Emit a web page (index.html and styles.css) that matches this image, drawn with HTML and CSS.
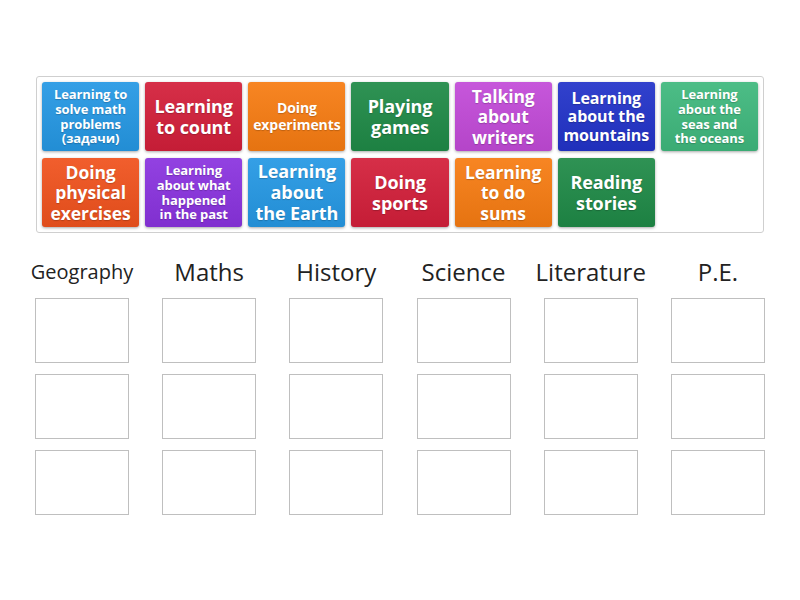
FILE: index.html
```html
<!DOCTYPE html>
<html>
<head>
<meta charset="utf-8">
<link rel="stylesheet" href="styles.css">
</head>
<body>
<main class="page">
  <section class="pool">
    <div class="card blue s13">Learning to<br>solve math<br>problems<br>(задачи)</div>
    <div class="card crimson s18">Learning<br>to count</div>
    <div class="card orange s14">Doing<br>experiments</div>
    <div class="card green s18">Playing<br>games</div>
    <div class="card magenta s175">Talking<br>about<br>writers</div>
    <div class="card navy s16">Learning<br>about the<br>mountains</div>
    <div class="card sea s13">Learning<br>about the<br>seas and<br>the oceans</div>
    <div class="card redorange s175">Doing<br>physical<br>exercises</div>
    <div class="card purple s13">Learning<br>about what<br>happened<br>in the past</div>
    <div class="card blue s18">Learning<br>about<br>the Earth</div>
    <div class="card crimson s18">Doing<br>sports</div>
    <div class="card orange s175">Learning<br>to do<br>sums</div>
    <div class="card green s18">Reading<br>stories</div>
  </section>
  <section class="groups">
    <div class="group"><h2 class="title small">Geography</h2><div class="slot"></div><div class="slot"></div><div class="slot"></div></div>
    <div class="group"><h2 class="title">Maths</h2><div class="slot"></div><div class="slot"></div><div class="slot"></div></div>
    <div class="group"><h2 class="title">History</h2><div class="slot"></div><div class="slot"></div><div class="slot"></div></div>
    <div class="group"><h2 class="title">Science</h2><div class="slot"></div><div class="slot"></div><div class="slot"></div></div>
    <div class="group"><h2 class="title">Literature</h2><div class="slot"></div><div class="slot"></div><div class="slot"></div></div>
    <div class="group"><h2 class="title">P.E.</h2><div class="slot"></div><div class="slot"></div><div class="slot"></div></div>
  </section>
</main>
</body>
</html>
```
FILE: styles.css
```css
html, body {
  margin: 0;
  padding: 0;
  background: #ffffff;
}
.page {
  width: 800px;
  height: 600px;
  box-sizing: border-box;
  padding: 76px 35px 0 35px;
  font-family: "Open Sans", "Noto Sans", sans-serif;
}
.pool {
  margin: 0 1px;
  box-sizing: border-box;
  width: 728px;
  height: 157px;
  border: 1px solid #cfcfcf;
  border-radius: 3px;
  padding: 5px;
  display: grid;
  grid-template-columns: repeat(7, 1fr);
  grid-auto-rows: 69px;
  column-gap: 6px;
  row-gap: 7px;
}
.card {
  border-radius: 3px;
  display: flex;
  align-items: center;
  justify-content: center;
  text-align: center;
  color: #ffffff;
  font-weight: 700;
  line-height: 1.15;
  padding: 0 2px;
  white-space: nowrap;
  background-image: linear-gradient(to bottom, rgba(255,255,255,0.07), rgba(0,0,0,0.07));
  box-shadow: 0 1px 3px rgba(0,0,0,0.35);
  text-shadow: 0 1px 1px rgba(0,0,0,0.2);
  letter-spacing: -0.1px;
}
.s13 { font-size: 13px; }
.s14 { font-size: 14px; }
.s16 { font-size: 16px; }
.s175 { font-size: 17.5px; }
.s18 { font-size: 18px; }
.blue { background-color: #2598e4; }
.crimson { background-color: #d31f3a; }
.orange { background-color: #f77c12; }
.green { background-color: #1f8a47; }
.magenta { background-color: #c24ad8; }
.navy { background-color: #2233c9; }
.sea { background-color: #3fb87d; }
.redorange { background-color: #f0521d; }
.purple { background-color: #8a33df; }
.groups {
  margin-top: 22px;
  width: 730px;
  display: grid;
  grid-template-columns: repeat(6, 94px);
  column-gap: 33.2px;
}
.group {
  display: flex;
  flex-direction: column;
  align-items: stretch;
  gap: 11px;
}
.title {
  margin: 0 -16px -2px -16px;
  height: 34px;
  line-height: 34px;
  text-align: center;
  font-size: 24px;
  font-weight: 400;
  color: #222222;
  white-space: nowrap;
}
.title.small { font-size: 20px; }
.slot {
  height: 65px;
  box-sizing: border-box;
  border: 1px solid #bfbfbf;
  background: #ffffff;
}
```
